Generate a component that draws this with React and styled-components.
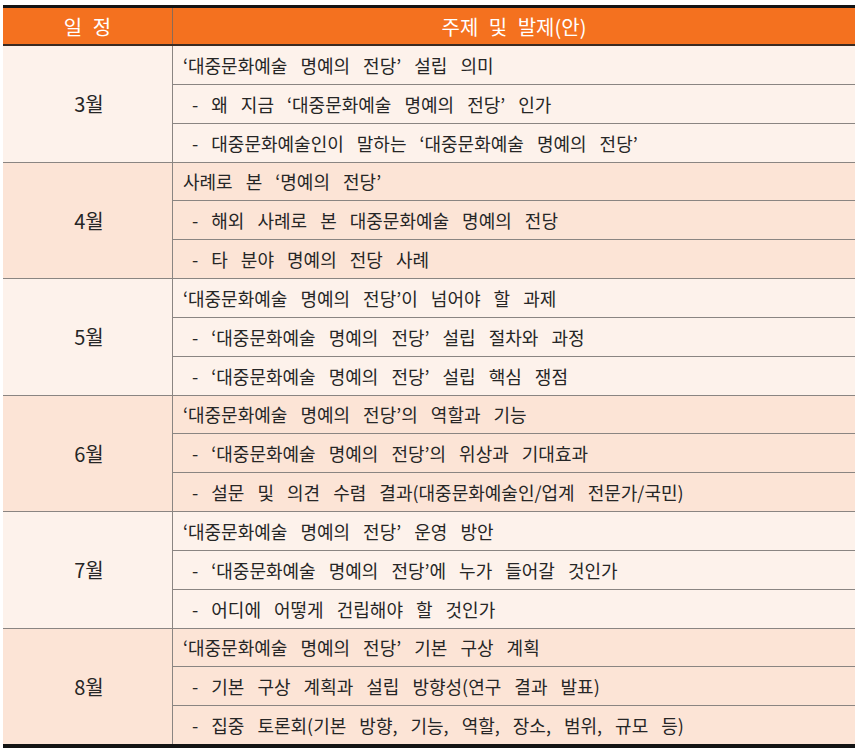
import React from "react";
import styled, { createGlobalStyle } from "styled-components";

const Global = createGlobalStyle`
  html, body { margin: 0; padding: 0; background: #ffffff; }
  body { font-family: "Noto Sans CJK KR", "Noto Sans", sans-serif; }
`;

const Page = styled.div`
  width: 860px;
  height: 748px;
  box-sizing: border-box;
  padding: 5px 5px 0 3px;
`;

const Table = styled.div`
  display: flex;
  flex-direction: column;
  border-top: 3px solid #141414;
  border-bottom: 4px solid #141414;
  height: 743px;
  box-sizing: border-box;
`;

const Header = styled.div`
  display: grid;
  grid-template-columns: 169px 1fr;
  height: 38px;
  box-sizing: border-box;
  background: #f4711f;
  border-bottom: 2px solid #3b2b22;
`;

const HeadCell = styled.div`
  display: flex;
  align-items: center;
  justify-content: center;
  color: #ffffff;
  font-size: 20px;
  word-spacing: 6px;
  border-left: ${(p) => (p.$divider ? "1px solid #8c6a55" : "none")};
`;

const Body = styled.div`
  flex: 1;
  display: flex;
  flex-direction: column;
`;

const Group = styled.div`
  flex: 1;
  display: grid;
  grid-template-columns: 169px 1fr;
  background: ${(p) => (p.$alt ? "#fce4d6" : "#fdf2eb")};
  border-top: ${(p) => (p.$first ? "none" : "1px solid #8a8582")};
`;

const Month = styled.div`
  display: flex;
  align-items: center;
  justify-content: center;
  font-size: 20px;
  color: #262626;
  padding-left: 3px;
`;

const Items = styled.div`
  display: flex;
  flex-direction: column;
  border-left: 1px solid #8a8582;
`;

const Item = styled.div`
  flex: 1;
  display: flex;
  align-items: center;
  padding-left: ${(p) => (p.$sub ? "19px" : "10px")};
  font-size: 18px;
  word-spacing: 9px;
  color: #262626;
  white-space: pre;
  border-top: ${(p) => (p.$first ? "none" : "1px solid #8a8582")};
`;

const data = [
  {
    m: "3월",
    items: [
      "‘대중문화예술 명예의 전당’ 설립 의미",
      "- 왜 지금 ‘대중문화예술 명예의 전당’ 인가",
      "- 대중문화예술인이 말하는 ‘대중문화예술 명예의 전당’",
    ],
  },
  {
    m: "4월",
    items: [
      "사례로 본 ‘명예의 전당’",
      "- 해외 사례로 본 대중문화예술 명예의 전당",
      "- 타 분야 명예의 전당 사례",
    ],
  },
  {
    m: "5월",
    items: [
      "‘대중문화예술 명예의 전당’이 넘어야 할 과제",
      "- ‘대중문화예술 명예의 전당’ 설립 절차와 과정",
      "- ‘대중문화예술 명예의 전당’ 설립 핵심 쟁점",
    ],
  },
  {
    m: "6월",
    items: [
      "‘대중문화예술 명예의 전당’의 역할과 기능",
      "- ‘대중문화예술 명예의 전당’의 위상과 기대효과",
      "- 설문 및 의견 수렴 결과(대중문화예술인/업계 전문가/국민)",
    ],
  },
  {
    m: "7월",
    items: [
      "‘대중문화예술 명예의 전당’ 운영 방안",
      "- ‘대중문화예술 명예의 전당’에 누가 들어갈 것인가",
      "- 어디에 어떻게 건립해야 할 것인가",
    ],
  },
  {
    m: "8월",
    items: [
      "‘대중문화예술 명예의 전당’ 기본 구상 계획",
      "- 기본 구상 계획과 설립 방향성(연구 결과 발표)",
      "- 집중 토론회(기본 방향, 기능, 역할, 장소, 범위, 규모 등)",
    ],
  },
];

export default function App() {
  return (
    <Page>
      <Global />
      <Table>
        <Header>
          <HeadCell>일 정</HeadCell>
          <HeadCell $divider>주제 및 발제(안)</HeadCell>
        </Header>
        <Body>
          {data.map((g, gi) => (
            <Group key={g.m} $alt={gi % 2 === 1} $first={gi === 0}>
              <Month>{g.m}</Month>
              <Items>
                {g.items.map((t, i) => (
                  <Item key={i} $first={i === 0} $sub={i > 0}>
                    {t}
                  </Item>
                ))}
              </Items>
            </Group>
          ))}
        </Body>
      </Table>
    </Page>
  );
}
